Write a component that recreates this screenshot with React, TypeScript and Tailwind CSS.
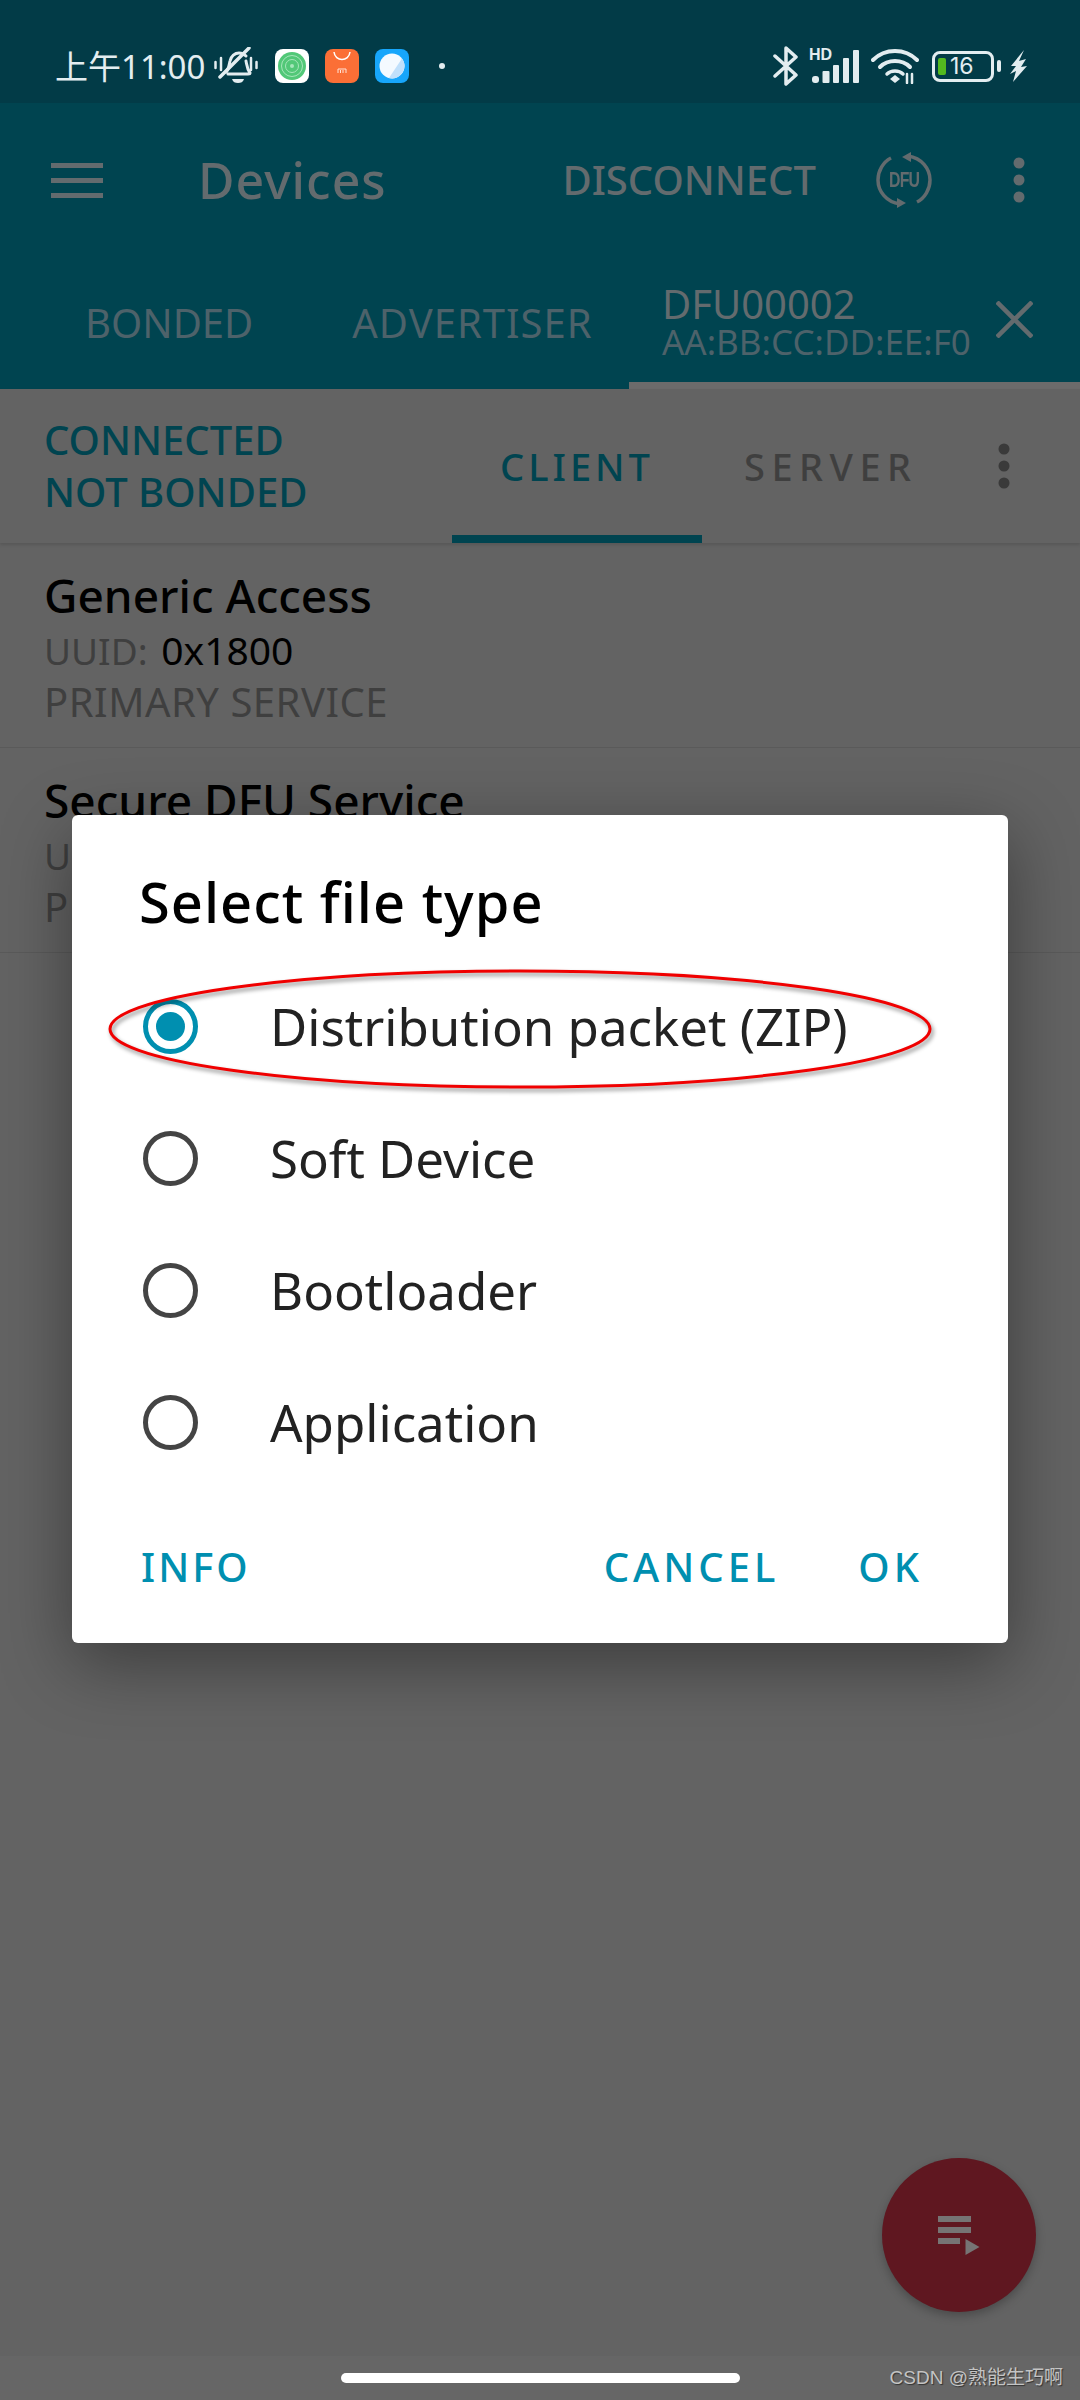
const font = { fontFamily: "'Noto Sans', 'Noto Sans CJK SC', sans-serif" };

function DotsIcon({ className }: { className: string }) {
  return (
    <svg viewBox="0 0 12 46" className={className} fill="currentColor">
      <circle cx="6" cy="6" r="5.5" />
      <circle cx="6" cy="23" r="5.5" />
      <circle cx="6" cy="40" r="5.5" />
    </svg>
  );
}

function MuteBell() {
  return (
    <svg viewBox="0 0 44 38" className="ml-[9px] h-[38px] w-[44px]" fill="none" stroke="#e3edf0" strokeWidth="3" strokeLinecap="round">
      <path d="M1.5 15v6M7 11v12M42.5 15v6M37 11v12" strokeWidth="2.5" />
      <path d="M12 25c3-3 3-7 4-11 1-5 5-8 9-8 3 0 5 1 7 3M32 14c1 5 1 8 4 12 0 1-1 1-2 1H14" />
      <path d="M35 1L6 30" strokeWidth="3.5" />
      <path d="M18 32h12c-1 3-3 4-6 4s-5-1-6-4z" fill="#e3edf0" stroke="none" />
    </svg>
  );
}

function AppIcons() {
  return (
    <div className="ml-[17px] flex items-center gap-[16px]">
      <svg viewBox="0 0 34 34" className="h-[34px] w-[34px]">
        <rect width="34" height="34" rx="8" fill="#fff" />
        <circle cx="17" cy="17" r="14" fill="#52c878" />
        <circle cx="17" cy="17" r="10.5" fill="none" stroke="#a6e6bb" strokeWidth="1" />
        <circle cx="17" cy="17" r="6.5" fill="none" stroke="#a6e6bb" strokeWidth="1" />
        <circle cx="17" cy="17" r="2" fill="#a6e6bb" />
      </svg>
      <svg viewBox="0 0 34 34" className="h-[34px] w-[34px]">
        <rect width="34" height="34" rx="8" fill="#fb6f36" />
        <path d="M9 3c1 10 15 10 16 0" fill="none" stroke="#fff" strokeWidth="1.5" />
        <path d="M13 24v-4h8v4M15.5 24v-3M18 24v-3" fill="none" stroke="#ffe3d6" strokeWidth="1" />
      </svg>
      <svg viewBox="0 0 34 34" className="h-[34px] w-[34px]">
        <rect width="34" height="34" rx="8" fill="#17a6fb" />
        <circle cx="17" cy="17" r="12.5" fill="#f4faff" />
        <path d="M27 9.5A12.5 12.5 0 0 1 14 29L27 9.5z" fill="#c0e0fb" />
      </svg>
      <span className="ml-[14px] h-[6px] w-[6px] rounded-full bg-[#e3edf0]" />
    </div>
  );
}

function StatusRight() {
  return (
    <div className="flex items-center text-[#e3edf0]">
      <svg viewBox="0 0 25 40" className="h-[40px] w-[25px]" fill="none" stroke="currentColor" strokeWidth="3.5" strokeLinejoin="round" strokeLinecap="round">
        <path d="M2 10l21 19-10 9V2l10 9L2 30" />
      </svg>
      <div className="relative ml-[11px] h-[34px] w-[51px]">
        <span className="absolute left-0 top-[-2px] text-[16px] font-bold leading-[16px]" style={{ fontFamily: "'Liberation Sans', sans-serif" }}>HD</span>
        <svg viewBox="0 0 51 34" className="h-[34px] w-[51px]" fill="currentColor">
          <rect x="3" y="27" width="7" height="7" rx="3" />
          <rect x="13.5" y="22" width="7" height="12" rx="1" />
          <rect x="24" y="16" width="6" height="18" rx="1" />
          <rect x="34" y="9" width="6" height="25" rx="1" />
          <rect x="44" y="1" width="6" height="33" rx="1" />
        </svg>
      </div>
      <svg viewBox="0 0 48 36" className="ml-[11px] h-[36px] w-[48px]" fill="none" stroke="currentColor" strokeWidth="4" strokeLinecap="round">
        <path d="M2 12c12-12 32-12 44 0" />
        <path d="M9 19c8-8 22-8 30 0" />
        <path d="M16 26c4-4 12-4 16 0" strokeWidth="3.5" />
        <path d="M19 31l5-4 5 4-5 4z" fill="currentColor" stroke="none" />
        <path d="M36 26v9M41 26v9" strokeWidth="2.5" />
      </svg>
      <div className="ml-[13px] flex h-[31px] w-[62px] items-center rounded-[8px] border-[3px] border-[#e3edf0] pl-[3px]">
        <span className="h-[17px] w-[8px] rounded-[2px] bg-[#53b91f]" />
        <span className="ml-[4px] text-[23px] leading-none" style={{ fontFamily: "Inter, sans-serif" }}>16</span>
      </div>
      <span className="ml-[3px] h-[12px] w-[4px] rounded-[2px] bg-[#e3edf0]" />
      <svg viewBox="0 0 18 32" className="ml-[9px] h-[32px] w-[18px]" fill="currentColor">
        <path d="M14 0L1 16h5L0 24l6-3-3 11 14-16-6 1 5-8-7 2z" />
      </svg>
    </div>
  );
}

function DfuIcon() {
  return (
    <div className="relative ml-[60px] flex h-[56px] w-[56px] items-center justify-center">
      <svg viewBox="0 0 56 56" className="absolute inset-0 h-[56px] w-[56px]" fill="none" stroke="#636b6e" strokeWidth="3.5">
        <path d="M32 4c14 2 22 13 22 24 0 9-5 18-13 22" />
        <path d="M24 52C10 50 2 39 2 28 2 19 7 10 15 6" />
        <path d="M35 0l-9 5 9 5z" fill="#636b6e" stroke="none" />
        <path d="M21 46l9 5-9 5z" fill="#636b6e" stroke="none" />
      </svg>
      <span className="text-[22px] font-bold leading-none tracking-[-1px] text-[#636b6e]" style={{ fontFamily: "'Liberation Sans', sans-serif", transform: "scaleX(0.72)" }}>DFU</span>
    </div>
  );
}

function ServiceRow({ name, uuid }: { name: string; uuid: string }) {
  return (
    <div className="h-[205px] border-b border-[#5a5a5a] pl-[44px] pt-[25px]">
      <p className="text-[46px] font-medium leading-[54px] text-black">{name}</p>
      <p className="mt-[3px] text-[37px] leading-[50px] text-[#3f3f3f]">
        UUID: <span className="ml-[4px] text-[39px] text-black">{uuid}</span>
      </p>
      <p className="mt-[1px] text-[40px] leading-[50px] tracking-[0.5px] text-[#3f3f3f]">PRIMARY SERVICE</p>
    </div>
  );
}

function FileOption({ label, checked }: { label: string; checked?: boolean }) {
  return (
    <div className="flex h-[132px] items-center pl-[71px]">
      <span className={`flex h-[55px] w-[55px] items-center justify-center rounded-full border-[5px] ${checked ? "border-[#008fb0]" : "border-[#444444]"}`}>
        {checked && <span className="h-[29px] w-[29px] rounded-full bg-[#008fb0]" />}
      </span>
      <span className="ml-[72px] text-[51px] leading-none text-[#222222]">{label}</span>
    </div>
  );
}

export default function App() {
  return (
    <div className="relative flex h-[2400px] w-[1080px] flex-col overflow-hidden bg-[#636363]" style={font}>
      <div className="flex h-[103px] shrink-0 items-center justify-between bg-[#023b47] pl-[55px] pr-[52px] pt-[29px]">
        <div className="flex items-center">
          <span className="text-[33px] leading-none text-[#e3edf0]">上午11:00</span>
          <MuteBell />
          <AppIcons />
        </div>
        <StatusRight />
      </div>

      <div className="flex h-[286px] shrink-0 flex-col bg-[#004450]">
        <div className="flex h-[154px] items-center pl-[51px] pr-[55px]">
          <svg viewBox="0 0 52 35" className="h-[35px] w-[52px]" fill="#636b6e">
            <rect width="52" height="5" />
            <rect y="15" width="52" height="5" />
            <rect y="30" width="52" height="5" />
          </svg>
          <span className="ml-[95px] text-[50px] font-medium leading-none tracking-[1px] text-[#636b6e]">Devices</span>
          <span className="ml-auto text-[40px] font-medium leading-none text-[#636b6e]">DISCONNECT</span>
          <DfuIcon />
          <DotsIcon className="ml-[81px] h-[46px] w-[12px] text-[#636b6e]" />
        </div>
        <div className="flex flex-1 items-end">
          <div className="flex h-[132px] flex-1 items-center pl-[85px] text-[40px] leading-none text-[#4d626a]">
            <span>BONDED</span>
            <span className="ml-[99px] tracking-[1px]">ADVERTISER</span>
          </div>
          <div className="flex h-[132px] w-[451px] items-center border-b-[7px] border-[#6b6b6b] pl-[33px] pr-[47px]">
            <div className="flex flex-col pt-[4px]">
              <span className="text-[40px] leading-[40px] text-[#636b6e]">DFU00002</span>
              <span className="text-[35px] leading-[36px] text-[#4d626a]">AA:BB:CC:DD:EE:F0</span>
            </div>
            <svg viewBox="0 0 37 37" className="ml-auto h-[37px] w-[37px]" stroke="#636b6e" strokeWidth="4.5">
              <path d="M1 1l35 35M36 1L1 36" />
            </svg>
          </div>
        </div>
      </div>

      <div className="flex h-[154px] shrink-0 items-stretch shadow-[0_2px_3px_rgba(0,0,0,0.12)]">
        <div className="flex w-[452px] flex-col justify-center pl-[44px] text-[40px] font-medium leading-[52px] text-[#004450]">
          <span>CONNECTED</span>
          <span>NOT BONDED</span>
        </div>
        <div className="flex w-[250px] items-center justify-center border-b-[8px] border-[#004450] pt-[8px] text-[38px] font-medium tracking-[4px] text-[#004450]">
          CLIENT
        </div>
        <div className="flex flex-1 items-center pl-[42px]">
          <span className="text-[38px] font-medium tracking-[6.5px] text-[#3f3f3f]">SERVER</span>
          <DotsIcon className="ml-[80px] h-[46px] w-[12px] text-[#3a3a3a]" />
        </div>
      </div>

      <ServiceRow name="Generic Access" uuid="0x1800" />
      <ServiceRow name="Secure DFU Service" uuid="0xFE59" />

      <div className="flex-1" />
      <div className="flex h-[44px] shrink-0 items-center justify-center bg-[#666666]">
        <div className="h-[10px] w-[399px] rounded-full bg-white" />
      </div>

      <div className="absolute left-[72px] top-[815px] h-[828px] w-[936px] rounded-[6px] bg-white shadow-[0_20px_70px_rgba(0,0,0,0.4)]">
        <h2 className="pl-[67px] pt-[54px] text-[56px] font-medium leading-[64px] tracking-[1px] text-black">Select file type</h2>
        <div className="mt-[27px]">
          <FileOption label="Distribution packet (ZIP)" checked />
          <FileOption label="Soft Device" />
          <FileOption label="Bootloader" />
          <FileOption label="Application" />
        </div>
        <div className="mt-[49px] flex items-center pl-[69px] pr-[85px] text-[40px] font-medium tracking-[4px] text-[#008fb0]">
          <span className="tracking-[3px]">INFO</span>
          <span className="ml-auto">CANCEL</span>
          <span className="ml-[79px]">OK</span>
        </div>
      </div>

      <svg viewBox="0 0 826 122" className="absolute left-[107px] top-[969px] h-[122px] w-[826px] drop-shadow-[2px_3px_2px_rgba(0,0,0,0.45)]" fill="none">
        <ellipse cx="413" cy="60" rx="410" ry="58" stroke="#f00000" strokeWidth="3" />
      </svg>

      <div className="absolute left-[882px] top-[2158px] flex h-[154px] w-[154px] items-center justify-center rounded-full bg-[#5f1720] shadow-[0_4px_10px_rgba(0,0,0,0.25)]">
        <svg viewBox="0 0 42 39" className="h-[39px] w-[42px]" fill="#767474">
          <rect x="0" y="0" width="33" height="6" />
          <rect x="0" y="11" width="33" height="6" />
          <rect x="0" y="22" width="22" height="6" />
          <path d="M27.5 23l14 8-14 8z" />
        </svg>
      </div>

      <span className="absolute bottom-[10px] right-[17px] text-[19px] leading-[24px] text-[#c4c4c4] [text-shadow:1px_1px_1px_rgba(0,0,0,0.5)]" style={{ fontFamily: "'Liberation Sans', 'Noto Sans CJK SC', sans-serif" }}>
        CSDN @熟能生巧啊
      </span>
    </div>
  );
}
